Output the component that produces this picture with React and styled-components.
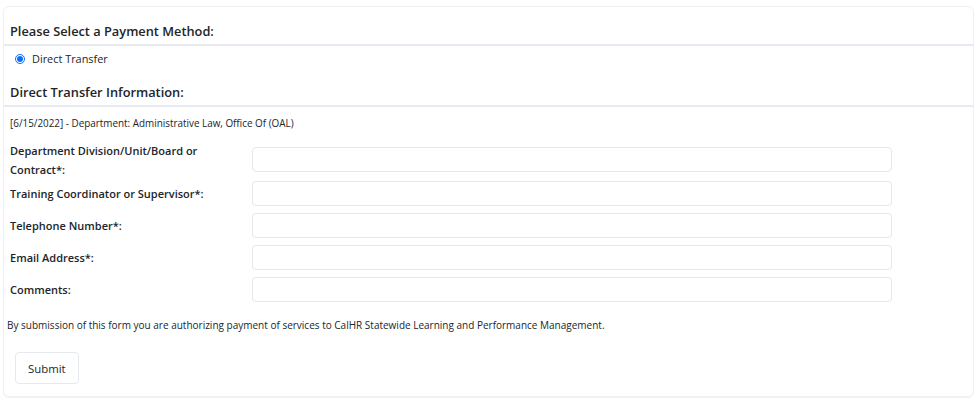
import React from 'react';
import styled, { createGlobalStyle } from 'styled-components';

const GlobalStyle = createGlobalStyle`
  html, body {
    margin: 0;
    padding: 0;
    background: #ffffff;
  }
  body {
    font-family: "Open Sans", "Noto Sans", "Liberation Sans", sans-serif;
    color: #212529;
  }
`;

const Page = styled.div`
  padding: 6px 6px 6px 3px;
`;

const Card = styled.div`
  border: 1px solid #eef0f4;
  border-radius: 6px;
  box-shadow: 0 1px 1px rgba(0, 0, 0, 0.06);
  padding-bottom: 12px;
`;

const SectionHeader = styled.h3`
  margin: 0;
  padding: ${p => p.$top}px 6px 3px;
  font-size: 12.8px;
  line-height: 20px;
  font-weight: 600;
  border-bottom: 2px solid #e7eaf1;
`;

const RadioRow = styled.label`
  display: flex;
  align-items: center;
  gap: 7px;
  padding: 4px 11px 0;
  height: 18px;
  font-size: 10.9px;
  line-height: 18px;
`;

const Radio = styled.input`
  margin: 0;
  width: 10px;
  height: 10px;
  accent-color: #0d6efd;
`;

const Note = styled.div`
  padding: ${p => p.$pad};
  font-size: ${p => p.$size}px;
  line-height: 16px;
`;

const Form = styled.div`
  display: flex;
  flex-direction: column;
  margin-top: 16px;
  padding-left: 6px;
`;

const Row = styled.div`
  display: flex;
  align-items: center;
  height: 25px;
  margin-bottom: ${p => p.$gap}px;
`;

const Label = styled.label`
  width: 242px;
  font-size: 11px;
  line-height: 19px;
  font-weight: 600;
  padding-right: 12px;
  box-sizing: border-box;
`;

const Input = styled.input`
  width: 640px;
  height: 25px;
  box-sizing: border-box;
  border: 1px solid #e4e7ee;
  border-radius: 4px;
  background: #fff;
  outline: none;
`;

const SubmitButton = styled.button`
  margin: 19px 0 0 11px;
  height: 32px;
  padding: 0 12px;
  background: #fff;
  border: 1px solid #e6e9ef;
  border-radius: 4px;
  font-family: inherit;
  font-size: 11.4px;
  color: #212529;
`;

const fields = [
  { label: 'Department Division/Unit/Board or Contract*:', gap: 9 },
  { label: 'Training Coordinator or Supervisor*:', gap: 7 },
  { label: 'Telephone Number*:', gap: 7 },
  { label: 'Email Address*:', gap: 7 },
  { label: 'Comments:', gap: 0 },
];

export default function App() {
  return (
    <Page>
      <GlobalStyle />
      <Card>
        <SectionHeader $top={14}>Please Select a Payment Method:</SectionHeader>
        <RadioRow>
          <Radio type="radio" name="payment" defaultChecked />
          Direct Transfer
        </RadioRow>
        <SectionHeader $top={14}>Direct Transfer Information:</SectionHeader>
        <Note $pad="8px 6px 0" $size={9.9}>
          [6/15/2022] - Department: Administrative Law, Office Of (OAL)
        </Note>
        <Form>
          {fields.map(f => (
            <Row key={f.label} $gap={f.gap}>
              <Label>{f.label}</Label>
              <Input type="text" />
            </Row>
          ))}
        </Form>
        <Note $pad="15px 3px 0" $size={10}>
          By submission of this form you are authorizing payment of services to CalHR Statewide Learning and Performance Management.
        </Note>
        <SubmitButton type="button">Submit</SubmitButton>
      </Card>
    </Page>
  );
}
